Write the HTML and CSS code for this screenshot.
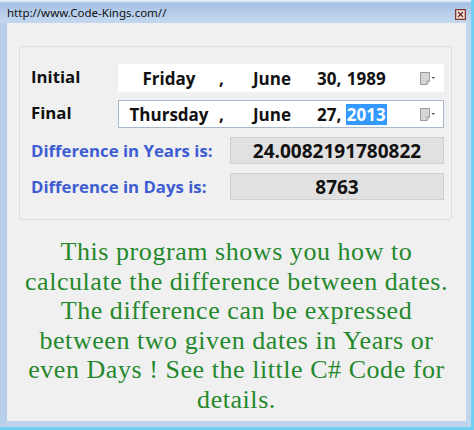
FILE: index.html
```html
<!DOCTYPE html>
<html>
<head>
<meta charset="utf-8">
<link rel="stylesheet" href="styles.css">
</head>
<body>
<div class="window">
  <div class="titlebar">
    <span class="title">http://www.Code-Kings.com//</span>
    <span class="close"><svg width="11" height="11" viewBox="0 0 11 11"><rect x="0.5" y="0.5" width="10" height="10" fill="#d9a9a0" stroke="#7a3a32"/><rect x="2" y="2" width="7" height="7" fill="#f4e6e2"/><path d="M3 3 L8 8 M8 3 L3 8" stroke="#6a2a22" stroke-width="1.4"/></svg></span>
  </div>
  <div class="client">
    <div class="group">
      <div class="row row-date">
        <span class="label">Initial</span>
        <div class="picker">
          <span class="f-day">Friday</span><span class="f-comma">,</span><span class="f-month">June</span><span class="f-date">30, </span><span class="f-year">1989</span>
          <span class="cal"><svg width="15" height="13" viewBox="0 0 15 13"><path d="M0.5 0.5 H9.5 V9 L7 12.5 H0.5 Z" fill="#d6d6d6" stroke="#9a9a9a"/><path d="M9.5 9 H7 V12.5" fill="#eeeeee" stroke="#9a9a9a"/><path d="M11.5 5 H15 L13.25 7 Z" fill="#555"/></svg></span>
        </div>
      </div>
      <div class="row row-date">
        <span class="label">Final</span>
        <div class="picker focused">
          <span class="f-day">Thursday</span><span class="f-comma">,</span><span class="f-month">June</span><span class="f-date">27, </span><span class="f-year sel">2013</span>
          <span class="cal"><svg width="15" height="13" viewBox="0 0 15 13"><path d="M0.5 0.5 H9.5 V9 L7 12.5 H0.5 Z" fill="#d6d6d6" stroke="#9a9a9a"/><path d="M9.5 9 H7 V12.5" fill="#eeeeee" stroke="#9a9a9a"/><path d="M11.5 5 H15 L13.25 7 Z" fill="#555"/></svg></span>
        </div>
      </div>
      <div class="row row-out">
        <span class="label blue">Difference in Years is:</span>
        <div class="outbox">24.0082191780822</div>
      </div>
      <div class="row row-out">
        <span class="label blue">Difference in Days is:</span>
        <div class="outbox">8763</div>
      </div>
    </div>
    <p class="info">This program shows you how to<br>calculate the difference between dates.<br>The difference can be expressed<br>between two given dates in Years or<br>even Days ! See the little C# Code for<br>details.</p>
  </div>
</div>
</body>
</html>
```
FILE: styles.css
```css
html, body {
  margin: 0;
  padding: 0;
}
body {
  width: 474px;
  height: 430px;
  overflow: hidden;
  background: #6fd0f2;
}
.window {
  width: 474px;
  height: 430px;
  box-sizing: border-box;
  padding: 0 3px 3px 0;
  background: #6fd0f2;
  display: flex;
  flex-direction: column;
}
.titlebar {
  height: 23px;
  flex: none;
  display: flex;
  align-items: center;
  justify-content: space-between;
  padding: 0 0 0 7px;
  background: linear-gradient(#e4edf8 0px, #e4edf8 1px, #a5bfe2 3px, #b6cdea 12px, #c4d7ef 23px);
  box-sizing: border-box;
}
.title {
  font-family: "Noto Sans", "Open Sans", sans-serif;
  font-size: 11.5px;
  color: #111;
  padding-top: 2px;
}
.close {
  display: flex;
  margin-right: 5px;
  margin-top: 5px;
}
.client {
  flex: 1;
  background: #f0f0f0;
  border-left: 7px solid #b8cfea;
  border-bottom: 6px solid #c0d4ec;
  border-right: 5px solid #c2d6ee;
  display: flex;
  flex-direction: column;
  align-items: center;
}
.group {
  align-self: flex-start;
  margin: 23px 0 0 12px;
  width: 433px;
  height: 174px;
  box-sizing: border-box;
  border: 1px solid #d8dde2;
  border-radius: 3px;
  padding: 17px 7px 0 11px;
  display: flex;
  flex-direction: column;
}
.row {
  display: flex;
  align-items: center;
  justify-content: space-between;
}
.row-date { height: 28px; }
.row-date + .row-date { margin-top: 8px; }
.row-out { margin-top: 9px; }
.label {
  font-family: "Open Sans", "Noto Sans", sans-serif;
  font-weight: 700;
  font-size: 16.8px;
  color: #111;
  margin-top: -4px;
}
.label.blue {
  color: #3d5dd3;
  margin-top: 0;
}
.picker {
  width: 326px;
  height: 28px;
  box-sizing: border-box;
  background: #fff;
  border: 1px solid #fff;
  display: flex;
  align-items: center;
  font-family: "Open Sans", "Noto Sans", sans-serif;
  font-weight: 700;
  font-size: 17px;
  color: #111;
}
.picker.focused {
  border-color: #a9b8c8;
}
.f-day {
  width: 100px;
  text-align: center;
}
.f-comma {
  width: 8px;
}
.f-month {
  width: 90px;
  text-align: center;
}
.f-date { white-space: pre; }
.f-year { padding: 0 1px; }
.f-year.sel {
  background: #3399ff;
  color: #fff;
  line-height: 21px;
}
.cal {
  margin-left: auto;
  margin-right: 8px;
  display: flex;
}
.outbox {
  width: 214px;
  height: 27px;
  box-sizing: border-box;
  background: #e1e1e1;
  border: 1px solid #d0d0d0;
  display: flex;
  align-items: center;
  justify-content: center;
  font-family: "Open Sans", "Noto Sans", sans-serif;
  font-weight: 700;
  font-size: 19px;
  color: #111;
}
.info {
  margin: 17px 0 0 0;
  text-align: center;
  font-family: "Liberation Serif", serif;
  font-size: 26px;
  letter-spacing: 0.55px;
  line-height: 29.6px;
  color: #24882c;
}
```
